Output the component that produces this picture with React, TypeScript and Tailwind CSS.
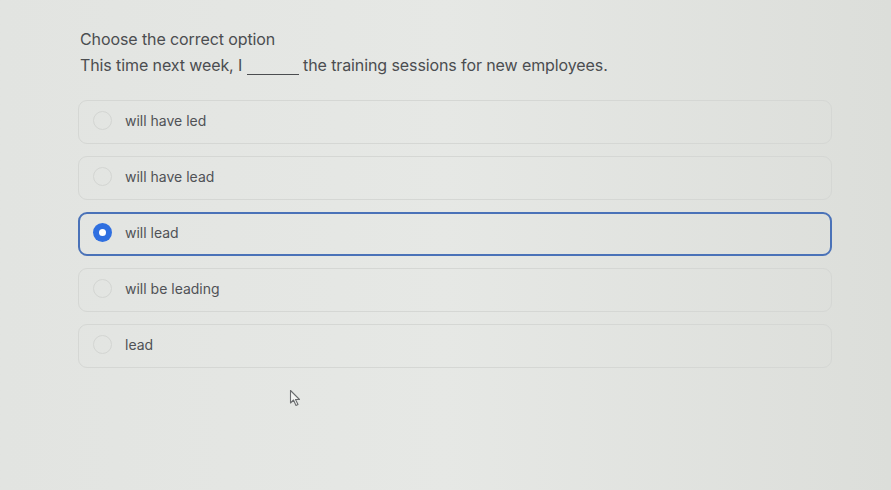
import { useState } from "react";

const options = ["will have led", "will have lead", "will lead", "will be leading", "lead"];

export default function App() {
  const [selected, setSelected] = useState("will lead");

  return (
    <div className="relative h-[490px] w-[891px] overflow-hidden bg-gradient-to-r from-[#e2e4e1] via-[#e6e8e5] to-[#dcdeda] font-['Inter',sans-serif] text-[#4b4d50]">
      <div className="pl-[78px] pr-[59px] pt-[28px]">
        <p className="ml-[2px] text-[16px] leading-[22px] tracking-[-0.1px]">Choose the correct option</p>
        <p className="ml-[2px] mt-[4px] text-[16px] leading-[22px] tracking-[-0.1px]">
          This time next week, I{" "}
          <span className="inline-block w-[52px] translate-y-[4px] border-b border-[#4b4d50]" />{" "}
          the training sessions for new employees.
        </p>

        <div className="mt-[24px] flex flex-col gap-[12px]">
          {options.map((option) => {
            const isSelected = option === selected;
            return (
              <button
                key={option}
                type="button"
                onClick={() => setSelected(option)}
                className={
                  isSelected
                    ? "flex h-[44px] w-full items-center gap-[13px] rounded-[9px] border-2 border-[#4a72b8] pb-[4px] pl-[13px] text-left"
                    : "flex h-[44px] w-full items-center gap-[13px] rounded-[9px] border border-[#d5d7d4] pb-[4px] pl-[14px] text-left"
                }
              >
                {isSelected ? (
                  <span className="flex h-[19px] w-[19px] items-center justify-center rounded-full bg-[#2f6fe0]">
                    <span className="h-[7px] w-[7px] rounded-full bg-white" />
                  </span>
                ) : (
                  <span className="h-[19px] w-[19px] rounded-full border border-[#d3d5d2]" />
                )}
                <span className="text-[14px] text-[#505256]">{option}</span>
              </button>
            );
          })}
        </div>
      </div>

      <svg
        className="absolute left-[289px] top-[389px]"
        width="14"
        height="18"
        viewBox="0 0 14 18"
      >
        <path d="M1.5 1.5 L1.5 14 L4.5 11 L7 16.5 L9 15.5 L6.5 10.5 L10.5 10.5 Z" fill="#f4f5f3" stroke="#6a6c6e" strokeWidth="1.1" strokeLinejoin="round" />
      </svg>
    </div>
  );
}
